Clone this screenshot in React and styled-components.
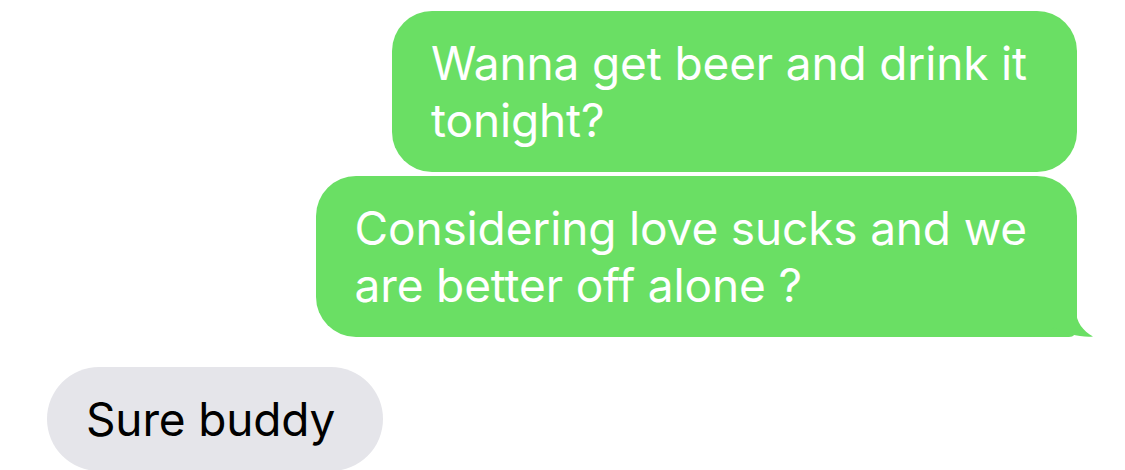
import styled, { createGlobalStyle } from "styled-components";

const GlobalStyle = createGlobalStyle`
  html, body {
    margin: 0;
    padding: 0;
    background: #ffffff;
  }
  body {
    font-family: Inter, "Liberation Sans", sans-serif;
    -webkit-font-smoothing: antialiased;
  }
`;

const Thread = styled.div`
  width: 1125px;
  height: 470px;
  overflow: hidden;
  box-sizing: border-box;
  padding: 11px 48px 0 47px;
  display: flex;
  flex-direction: column;
`;

const Row = styled.div`
  display: flex;
  justify-content: ${({ $out }) => ($out ? "flex-end" : "flex-start")};
  margin-top: ${({ $gap }) => $gap || 0}px;
`;

const Bubble = styled.div`
  position: relative;
  box-sizing: border-box;
  padding: 24px ${({ $pill }) => ($pill ? "48px" : "50px")} 23px 39px;
  font-size: 46px;
  line-height: 57px;
  letter-spacing: -0.15px;
  white-space: nowrap;
  color: ${({ $out }) => ($out ? "#ffffff" : "#000000")};
  background: ${({ $out }) => ($out ? "#6ADF64" : "#E5E5EA")};
  border-radius: ${({ $pill }) => ($pill ? "52px" : "40px")};
  ${({ $tail }) => $tail && "border-bottom-right-radius: 8px;"}
`;

const Tail = styled.svg`
  position: absolute;
  right: -17px;
  bottom: 0;
  width: 65px;
  height: 53px;
  display: block;
`;

const BubbleTail = () => (
  <Tail viewBox="0 0 65 53">
    <path
      d="M47 0 L47 26 C47 38 54 47 64 52.5 C52 53.5 36 50 26 43 C18 49.5 9 52.5 0 52.5 L0 0 Z"
      fill="#6ADF64"
    />
  </Tail>
);

const App = () => {
  return (
    <>
      <GlobalStyle />
      <Thread>
        <Row $out>
          <Bubble $out>
            Wanna get beer and drink it
            <br />
            tonight?
          </Bubble>
        </Row>
        <Row $out $gap={4}>
          <Bubble $out $tail>
            Considering love sucks and we
            <br />
            are better off alone ?
            <BubbleTail />
          </Bubble>
        </Row>
        <Row $gap={30}>
          <Bubble $pill>Sure buddy</Bubble>
        </Row>
      </Thread>
    </>
  );
};

export default App;
